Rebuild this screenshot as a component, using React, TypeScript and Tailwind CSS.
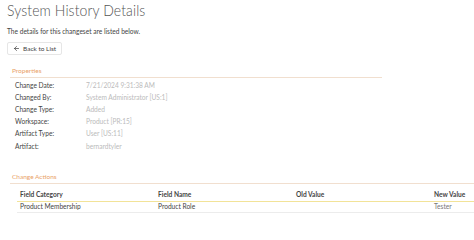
import { ArrowLeft } from "lucide-react";

const properties = [
  { label: "Change Date:", value: "7/21/2024 9:31:38 AM" },
  { label: "Changed By:", value: "System Administrator [US:1]" },
  { label: "Change Type:", value: "Added" },
  { label: "Workspace:", value: "Product [PR:15]" },
  { label: "Artifact Type:", value: "User [US:11]" },
  { label: "Artifact:", value: "bernardtyler" },
];

const actions = [
  { category: "Product Membership", field: "Product Role", oldValue: "", newValue: "Tester" },
];

export default function App() {
  return (
    <div className="w-[474px] h-[222px] overflow-hidden bg-white text-[#444] font-['Lato','Noto_Sans',sans-serif]">
      {/* Header */}
      <div className="pl-[7px] pt-[1px]">
        <h1 className="text-[14px] leading-[22px] font-light tracking-[0.1px] text-[#555] scale-y-[1.15] origin-bottom-left">
          System History Details
        </h1>
        <p className="mt-[3px] text-[6.6px] leading-[10px] text-[#444]">
          The details for this changeset are listed below.
        </p>
        <button className="mt-[6px] h-[13px] px-[5px] flex items-center gap-[3px] border border-[#e6e6e6] rounded-[2px] text-[6.5px] text-[#444] bg-white">
          <ArrowLeft size={7} strokeWidth={2.5} />
          Back to List
        </button>
      </div>

      {/* Properties */}
      <div className="mt-[11px] ml-[10px] w-[372px]">
        <div className="h-[12px] pl-[2px] flex items-end pb-[1px] border-b border-[#f1dfcf] text-[6.5px] text-[#e9a267]">
          Properties
        </div>
        <div className="mt-[2px] pl-[5px]">
          {properties.map((p) => (
            <div key={p.label} className="h-[12.1px] grid grid-cols-[71px_1fr] items-center text-[6.6px]">
              <span className="text-[#444]">{p.label}</span>
              <span className="text-[#bbb]">{p.value}</span>
            </div>
          ))}
        </div>
      </div>

      {/* Change Actions */}
      <div className="mt-[19px] ml-[10px]">
        <div className="h-[12px] pl-[2px] flex items-end pb-[1px] border-b border-[#f1dfcf] text-[6.5px] text-[#e9a267]">
          Change Actions
        </div>
        <table className="mt-[6px] ml-[7px] w-[552px] table-fixed border-collapse text-[6.6px]">
          <thead>
            <tr className="h-[12px] border-b border-[#f2e398]">
              <th className="w-[138px] pl-[3px] text-left font-bold text-[#444]">Field Category</th>
              <th className="w-[138px] pl-[3px] text-left font-bold text-[#444]">Field Name</th>
              <th className="w-[138px] pl-[3px] text-left font-bold text-[#444]">Old Value</th>
              <th className="w-[138px] pl-[3px] text-left font-bold text-[#444]">New Value</th>
            </tr>
          </thead>
          <tbody>
            {actions.map((a) => (
              <tr key={a.field} className="h-[11px] border-b border-[#ececec]">
                <td className="pl-[3px] text-[#444]">{a.category}</td>
                <td className="pl-[3px] text-[#444]">{a.field}</td>
                <td className="pl-[3px] text-[#444]">{a.oldValue}</td>
                <td className="pl-[3px] text-[#777]">{a.newValue}</td>
              </tr>
            ))}
          </tbody>
        </table>
      </div>
    </div>
  );
}
